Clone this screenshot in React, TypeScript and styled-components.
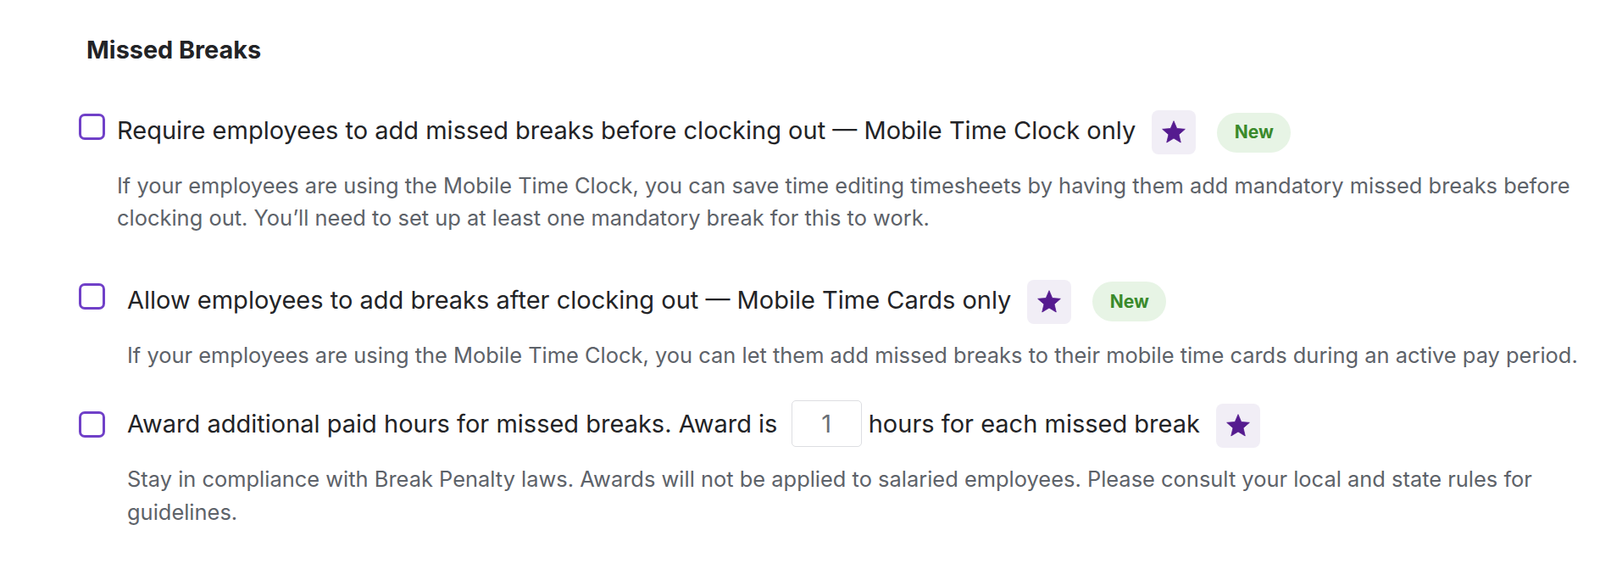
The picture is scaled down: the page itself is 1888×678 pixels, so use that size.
import React from 'react'
import styled, { createGlobalStyle } from 'styled-components'

const GlobalStyle = createGlobalStyle`
  html, body {
    margin: 0;
    padding: 0;
    background: #ffffff;
  }
  body {
    font-family: Inter, 'Noto Sans', sans-serif;
    color: #222326;
  }
`

const Page = styled.div`
  padding: 42px 20px 40px 93px;
`

const Heading = styled.h2`
  margin: 0 0 54px;
  padding-left: 9px;
  font-size: 28.8px;
  line-height: 34px;
  font-weight: 700;
  color: #222326;
`

const Option = styled.div<{ $gap: number }>`
  display: flex;
  align-items: flex-start;
  margin-bottom: ${({ $gap }) => $gap}px;
`

const Checkbox = styled.span<{ $offset: number }>`
  flex: none;
  box-sizing: border-box;
  width: 31px;
  height: 31px;
  margin-top: ${({ $offset }) => $offset}px;
  margin-right: 12px;
  border: 3px solid #7040c8;
  border-radius: 7px;
  background: #ffffff;
`

const Body = styled.div<{ $indent: number }>`
  flex: 1;
  min-width: 0;
  padding-left: ${({ $indent }) => $indent}px;
`

const Label = styled.div`
  font-size: 29px;
  line-height: 34px;
  font-weight: 400;
  color: #222326;
`

const StarButton = styled.span`
  display: inline-flex;
  align-items: center;
  justify-content: center;
  vertical-align: middle;
  width: 52px;
  height: 52px;
  margin-left: 19px;
  border-radius: 8px;
  background: #f1eef6;
`

const NewBadge = styled.span`
  display: inline-flex;
  align-items: center;
  justify-content: center;
  vertical-align: middle;
  box-sizing: border-box;
  width: 87px;
  height: 47px;
  margin-left: 25px;
  border-radius: 24px;
  background: #e7f4e5;
  color: #3a8a2c;
  font-size: 21px;
  font-weight: 700;
`

const HoursInput = styled.input`
  box-sizing: border-box;
  width: 83px;
  height: 55px;
  margin: 0 0 0 8px;
  padding: 0;
  border: 1px solid #dddee2;
  border-radius: 5px;
  background: #ffffff;
  font-family: inherit;
  font-size: 29px;
  color: #6a6f76;
  text-align: center;
  outline: none;
`

const Description = styled.p`
  margin: 18px 0 0;
  font-size: 25.45px;
  line-height: 38.4px;
  color: #5d6269;
`

const Star = () => (
  <svg width="32" height="32" viewBox="0 0 24 24" aria-hidden="true">
    <path
      fill="#551b8f"
      stroke="#551b8f"
      strokeWidth="0.6"
      strokeLinejoin="round"
      d="M12 17.27L18.18 21l-1.64-7.03L22 9.24l-7.19-.61L12 2 9.19 8.63 2 9.24l5.46 4.73L5.82 21z"
    />
  </svg>
)

const App: React.FC = () => (
  <Page>
    <GlobalStyle />
    <Heading>Missed Breaks</Heading>

    <Option $gap={53}>
      <Checkbox $offset={4} />
      <Body $indent={2}>
        <Label>
          Require employees to add missed breaks before clocking out — Mobile Time Clock only
          <StarButton>
            <Star />
          </StarButton>
          <NewBadge>New</NewBadge>
        </Label>
        <Description>
          If your employees are using the Mobile Time Clock, you can save time editing timesheets by having them
          add mandatory missed breaks before clocking out. You’ll need to set up at least one mandatory break for
          this to work.
        </Description>
      </Body>
    </Option>

    <Option $gap={34}>
      <Checkbox $offset={4} />
      <Body $indent={14}>
        <Label>
          Allow employees to add breaks after clocking out — Mobile Time Cards only
          <StarButton>
            <Star />
          </StarButton>
          <NewBadge>New</NewBadge>
        </Label>
        <Description>
          If your employees are using the Mobile Time Clock, you can let them add missed breaks to their mobile
          time cards during an active pay period.
        </Description>
      </Body>
    </Option>

    <Option $gap={0}>
      <Checkbox $offset={13} />
      <Body $indent={14}>
        <Label>
          Award additional paid hours for missed breaks. Award is <HoursInput defaultValue="1" /> hours for each
          missed break
          <StarButton>
            <Star />
          </StarButton>
        </Label>
        <Description>
          Stay in compliance with Break Penalty laws. Awards will not be applied to salaried employees. Please
          consult your local and state rules for guidelines.
        </Description>
      </Body>
    </Option>
  </Page>
)

export default App
